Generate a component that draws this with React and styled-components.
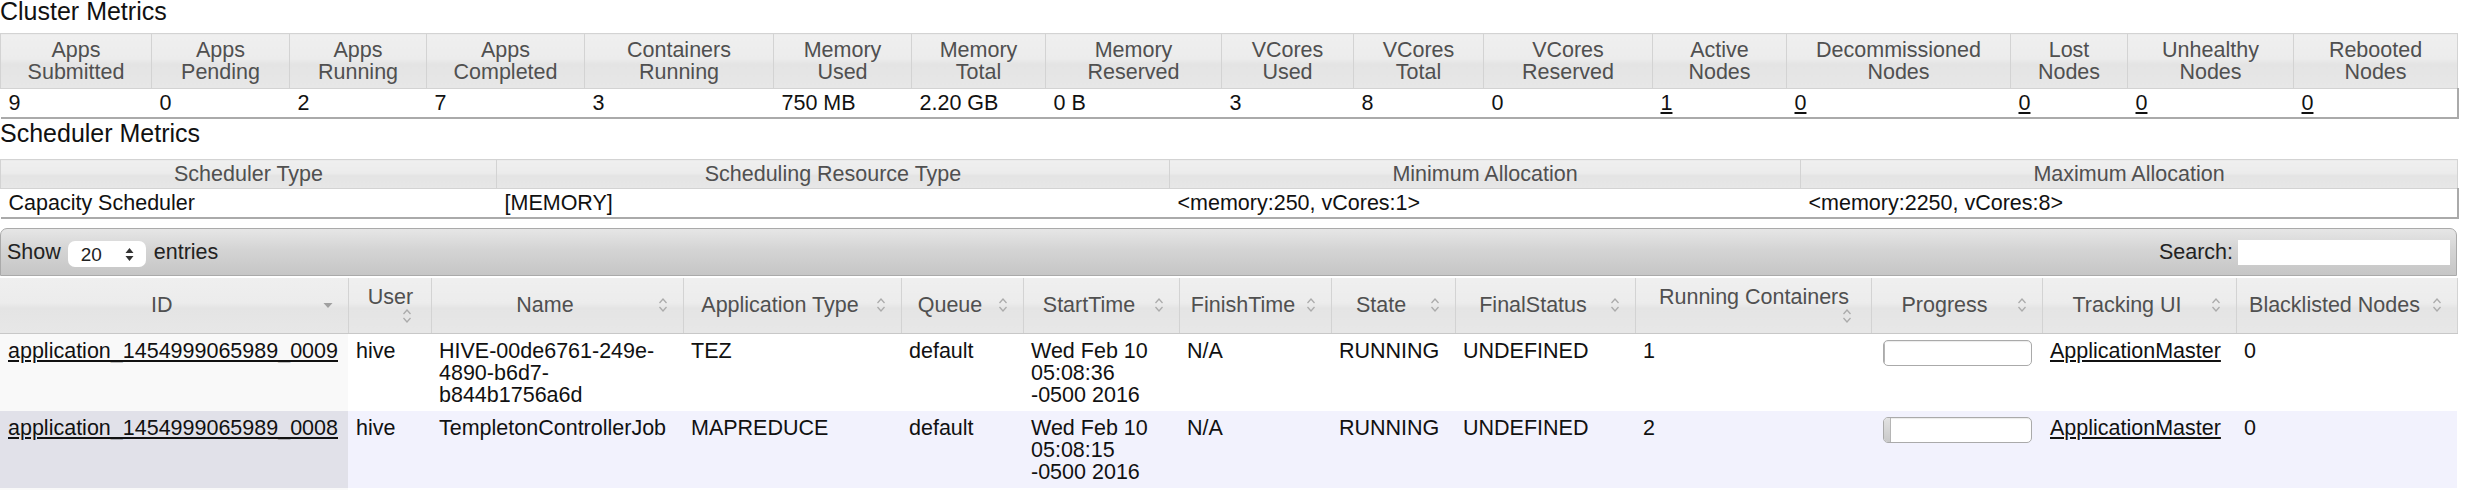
import React from "react";
import styled, { createGlobalStyle } from "styled-components";

const GlobalStyle = createGlobalStyle`
  body {
    margin: 0;
    background: #fff;
    font-family: "Liberation Sans", Arial, Helvetica, sans-serif;
    color: #111;
  }
`;

const clusterCols = [
  { label: ["Apps", "Submitted"], w: 151, value: "9" },
  { label: ["Apps", "Pending"], w: 138, value: "0" },
  { label: ["Apps", "Running"], w: 137, value: "2" },
  { label: ["Apps", "Completed"], w: 158, value: "7" },
  { label: ["Containers", "Running"], w: 189, value: "3" },
  { label: ["Memory", "Used"], w: 138, value: "750 MB" },
  { label: ["Memory", "Total"], w: 134, value: "2.20 GB" },
  { label: ["Memory", "Reserved"], w: 176, value: "0 B" },
  { label: ["VCores", "Used"], w: 132, value: "3" },
  { label: ["VCores", "Total"], w: 130, value: "8" },
  { label: ["VCores", "Reserved"], w: 169, value: "0" },
  { label: ["Active", "Nodes"], w: 134, value: "1", link: true },
  { label: ["Decommissioned", "Nodes"], w: 224, value: "0", link: true },
  { label: ["Lost", "Nodes"], w: 117, value: "0", link: true },
  { label: ["Unhealthy", "Nodes"], w: 166, value: "0", link: true },
  { label: ["Rebooted", "Nodes"], w: 164, value: "0", link: true },
];

const schedulerCols = [
  { label: "Scheduler Type", w: 496, value: "Capacity Scheduler" },
  { label: "Scheduling Resource Type", w: 673, value: "[MEMORY]" },
  { label: "Minimum Allocation", w: 631, value: "<memory:250, vCores:1>" },
  { label: "Maximum Allocation", w: 657, value: "<memory:2250, vCores:8>" },
];

const appCols = [
  { key: "id", label: "ID", w: 348, sorted: true },
  { key: "user", label: "User", w: 83, stack: true },
  { key: "name", label: "Name", w: 252 },
  { key: "type", label: "Application Type", w: 218 },
  { key: "queue", label: "Queue", w: 122 },
  { key: "start", label: "StartTime", w: 156 },
  { key: "finish", label: "FinishTime", w: 152 },
  { key: "state", label: "State", w: 124 },
  { key: "final", label: "FinalStatus", w: 180 },
  { key: "running", label: "Running Containers", w: 236, stack: true },
  { key: "progress", label: "Progress", w: 171 },
  { key: "tracking", label: "Tracking UI", w: 194 },
  { key: "blacklisted", label: "Blacklisted Nodes", w: 221 },
];

const apps = [
  {
    id: "application_1454999065989_0009",
    user: "hive",
    name: "HIVE-00de6761-249e-4890-b6d7-b844b1756a6d",
    type: "TEZ",
    queue: "default",
    start: "Wed Feb 10 05:08:36 -0500 2016",
    finish: "N/A",
    state: "RUNNING",
    final: "UNDEFINED",
    running: "1",
    progress: 0,
    blacklisted: "0",
  },
  {
    id: "application_1454999065989_0008",
    user: "hive",
    name: "TempletonControllerJob",
    type: "MAPREDUCE",
    queue: "default",
    start: "Wed Feb 10 05:08:15 -0500 2016",
    finish: "N/A",
    state: "RUNNING",
    final: "UNDEFINED",
    running: "2",
    progress: 5,
    blacklisted: "0",
  },
  {
    id: "application_1454999065989_0007",
    user: "hive",
    name: "HIVE-3c1e5a52-7f5d-4c1b-9d0e-2a6b8f3e41c7",
    type: "TEZ",
    queue: "default",
    start: "Wed Feb 10 05:07:52 -0500 2016",
    finish: "N/A",
    state: "RUNNING",
    final: "UNDEFINED",
    running: "1",
    progress: 0,
    blacklisted: "0",
  },
];

const Page = styled.div`
  width: 2457px;
  font-size: 21.5px;
`;

const Heading = styled.h3`
  margin: ${(p) => (p.$first ? "-1px 0 10px" : "2px 0 14px")};
  font-size: 25px;
  line-height: 24px;
  font-weight: normal;
  color: #111;
`;

const Table = styled.table`
  width: 100%;
  border-collapse: collapse;
  table-layout: fixed;
`;

const Col = styled.col`
  width: ${(p) => p.$w}px;
`;

const headBg = `linear-gradient(to bottom, #efefef 0%, #ececec 45%, #e4e4e4 55%, #e7e7e7 100%)`;

const HeadCell = styled.th`
  font-weight: normal;
  color: #505050;
  text-align: center;
  line-height: 22px;
  padding: ${(p) => (p.$tight ? "3px 4px" : "5px 4px")};
  background: ${headBg};
  border: 1px solid #d3d3d3;
`;

const Cell = styled.td`
  padding: 3px 8px;
  line-height: 22px;
  text-align: left;
  border-bottom: 2px solid #aaa;
  &:last-child {
    border-right: 2px solid #aaa;
  }
`;

const Link = styled.a`
  color: #111;
  text-decoration: underline;
  white-space: nowrap;
`;

const Toolbar = styled.div`
  margin-top: 9px;
  height: 48px;
  box-sizing: border-box;
  display: flex;
  align-items: center;
  justify-content: space-between;
  padding: 0 6px;
  border: 1px solid #aaa;
  border-radius: 7px 7px 0 0;
  background: linear-gradient(to bottom, #e6e6e6 0%, #d4d4d4 45%, #c6c6c6 100%);
  color: #222;
`;

const Group = styled.div`
  display: flex;
  align-items: center;
  gap: 7px;
`;

const SelectBox = styled.div`
  width: 78px;
  height: 26px;
  box-sizing: border-box;
  display: flex;
  align-items: center;
  justify-content: space-between;
  padding: 2px 12px 0 13px;
  margin: 3px 1px 0 0;
  background: #fff;
  border-radius: 7px;
  font-size: 19px;
`;

const SearchInput = styled.input`
  width: 212px;
  height: 25px;
  box-sizing: border-box;
  border: none;
  background: #fff;
  margin-left: -2px;
  outline: none;
`;

const AppTable = styled(Table)`
  margin-top: 2px;
`;

const AppHead = styled.th`
  height: 55px;
  box-sizing: border-box;
  padding: 0 6px 0 8px;
  font-weight: normal;
  color: #505050;
  text-align: center;
  line-height: 22px;
  background: ${headBg};
  border-right: 1px solid #d3d3d3;
  border-bottom: 1px solid #c8c8c8;
`;

const SortMark = styled.svg`
  width: 12px;
  height: 20px;
  ${(p) =>
    p.$stack
      ? `display: block; margin: -2px 12px -2px auto;`
      : `float: right; margin: 1px 8px 0 6px;`}
`;

const AppCell = styled.td`
  vertical-align: top;
  padding: 6px 8px 5px;
  line-height: 22px;
  text-align: left;
  background: ${(p) =>
    p.$even ? (p.$sorted ? "#e1e1e9" : "#f2f2fd") : p.$sorted ? "#f9f9f9" : "#fff"};
`;

const Bar = styled.div`
  width: 149px;
  height: 26px;
  box-sizing: border-box;
  margin-left: 4px;
  border: 1px solid #aaa;
  border-radius: 5px;
  background: #fff;
  box-shadow: inset 0 1px 1px rgba(0, 0, 0, 0.08);
  overflow: hidden;
`;

const BarValue = styled.div`
  height: 100%;
  background: linear-gradient(to bottom, #e2e2e2, #c9c9c9);
  border-right: 1px solid #b5b5b5;
  box-sizing: border-box;
`;

const SortIcon = ({ sorted, stack }) =>
  sorted ? (
    <SortMark viewBox="0 0 12 20" $stack={stack}>
      <path d="M1.5 8 L10.5 8 L6 13 Z" fill="#a0a0a0" />
    </SortMark>
  ) : (
    <SortMark viewBox="0 0 12 20" $stack={stack}>
      <path
        d="M2.5 8 L6 4 L9.5 8 M2.5 12 L6 16 L9.5 12"
        fill="none"
        stroke="#ababab"
        strokeWidth="1.3"
      />
    </SortMark>
  );

const SelectArrows = () => (
  <svg width="9" height="15" viewBox="0 0 9 15">
    <path d="M4.5 1 L8.5 6 L0.5 6 Z M4.5 14 L8.5 9 L0.5 9 Z" fill="#333" />
  </svg>
);

const renderAppValue = (col, app) => {
  if (col.key === "id") return <Link>{app.id}</Link>;
  if (col.key === "tracking") return <Link>ApplicationMaster</Link>;
  if (col.key === "progress")
    return (
      <Bar title={`${app.progress}%`}>
        <BarValue style={{ width: `${app.progress}%` }} />
      </Bar>
    );
  return app[col.key];
};

const App = () => {
  return (
    <Page>
      <GlobalStyle />
      <Heading $first>Cluster Metrics</Heading>
      <Table>
        <colgroup>
          {clusterCols.map((c, i) => (
            <Col key={i} $w={c.w} />
          ))}
        </colgroup>
        <thead>
          <tr>
            {clusterCols.map((c, i) => (
              <HeadCell key={i}>
                {c.label[0]}
                <br />
                {c.label[1]}
              </HeadCell>
            ))}
          </tr>
        </thead>
        <tbody>
          <tr>
            {clusterCols.map((c, i) => (
              <Cell key={i}>{c.link ? <Link>{c.value}</Link> : c.value}</Cell>
            ))}
          </tr>
        </tbody>
      </Table>

      <Heading>Scheduler Metrics</Heading>
      <Table>
        <colgroup>
          {schedulerCols.map((c, i) => (
            <Col key={i} $w={c.w} />
          ))}
        </colgroup>
        <thead>
          <tr>
            {schedulerCols.map((c, i) => (
              <HeadCell key={i} $tight>
                {c.label}
              </HeadCell>
            ))}
          </tr>
        </thead>
        <tbody>
          <tr>
            {schedulerCols.map((c, i) => (
              <Cell key={i}>{c.value}</Cell>
            ))}
          </tr>
        </tbody>
      </Table>

      <Toolbar>
        <Group>
          Show
          <SelectBox>
            20
            <SelectArrows />
          </SelectBox>
          entries
        </Group>
        <Group>
          Search:
          <SearchInput type="text" />
        </Group>
      </Toolbar>

      <AppTable>
        <colgroup>
          {appCols.map((c) => (
            <Col key={c.key} $w={c.w} />
          ))}
        </colgroup>
        <thead>
          <tr>
            {appCols.map((c) =>
              c.stack ? (
                <AppHead key={c.key}>
                  {c.label}
                  <SortIcon stack />
                </AppHead>
              ) : (
                <AppHead key={c.key}>
                  <SortIcon sorted={c.sorted} />
                  {c.label}
                </AppHead>
              )
            )}
          </tr>
        </thead>
        <tbody>
          {apps.map((app, r) => (
            <tr key={app.id}>
              {appCols.map((c) => (
                <AppCell key={c.key} $even={r % 2 === 1} $sorted={c.sorted}>
                  {renderAppValue(c, app)}
                </AppCell>
              ))}
            </tr>
          ))}
        </tbody>
      </AppTable>
    </Page>
  );
};

export default App;
